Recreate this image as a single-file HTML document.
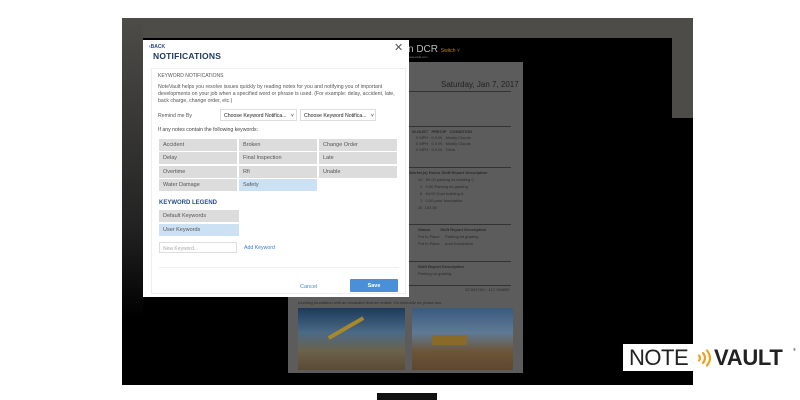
<!DOCTYPE html>
<html><head><meta charset="utf-8"><style>
*{margin:0;padding:0;box-sizing:border-box}
body{width:800px;height:400px;background:#fff;position:relative;overflow:hidden;font-family:"Liberation Sans",sans-serif}
.a{position:absolute}
.t{position:absolute;white-space:nowrap}
.cell{position:absolute;height:12px;background:#dcdcdc;font-size:5.5px;color:#555;padding:3px 0 0 4px}
.blue{background:#cde1f5}
.r{position:absolute;color:#2a2a2a;font-size:4px;white-space:nowrap}
</style></head><body>
<div class="a" style="left:377px;top:393px;width:60px;height:7px;background:#111"></div>
<div class="a" style="left:122px;top:18px;width:571px;height:367px;background:#000"></div>
<div class="a" style="left:122px;top:18px;width:571px;height:100px;background:#4d4c48"></div>
<div class="a" style="left:122px;top:18px;width:21px;height:300px;background:linear-gradient(#4d4c48,#222 70%,#000)"></div>
<div class="a" style="left:143px;top:38px;width:529px;height:344px;background:#000"></div>
<!-- report -->
<div class="t" style="left:408px;top:44px;color:#bbb;font-size:10px">n DCR <span style="color:#b8860b;font-size:5px">Switch ˅</span></div>
<div class="t" style="left:409px;top:55px;color:#888;font-size:3px">notevault.com</div>
<div class="a" style="left:408px;top:62px;width:115px;height:308px;background:#5c5c5c"></div>
<div class="a" style="left:288px;top:296px;width:235px;height:77px;background:#5c5c5c"></div>
<div class="t" style="left:441px;top:80px;color:#222;font-size:8px">Saturday, Jan 7, 2017</div>
<div class="a" style="left:408px;top:91px;width:103px;height:1px;background:#333"></div>
<div class="a" style="left:408px;top:126px;width:103px;height:1px;background:#333"></div>
<div class="r" style="left:412px;top:129px;font-weight:bold">W-GUST &nbsp; PRECIP &nbsp; CONDITION</div>
<div class="r" style="left:416px;top:135px">0 MPH &nbsp; 0.0 IN &nbsp; Mostly Clouds</div>
<div class="r" style="left:416px;top:141px">0 MPH &nbsp; 0.0 IN &nbsp; Mostly Clouds</div>
<div class="r" style="left:416px;top:147px">0 MPH &nbsp; 0.0 IN &nbsp; Clear</div>
<div class="a" style="left:408px;top:167px;width:103px;height:1px;background:#333"></div>
<div class="r" style="left:409px;top:170px;font-weight:bold">Worker(s) Hours Shift Report Description</div>
<div class="r" style="left:418px;top:177px">10 &nbsp; 80.00 parking lot building C</div>
<div class="r" style="left:420px;top:184px">1 &nbsp; 9.50 Parking lot grading</div>
<div class="r" style="left:420px;top:191px">8 &nbsp; 64.00 Duct building A</div>
<div class="r" style="left:420px;top:198px">1 &nbsp; 0.00 pour foundation</div>
<div class="r" style="left:418px;top:205px">20 &nbsp;153.50</div>
<div class="a" style="left:408px;top:224px;width:103px;height:1px;background:#333"></div>
<div class="r" style="left:418px;top:227px;font-weight:bold">Status &nbsp; &nbsp; &nbsp; &nbsp; Shift Report Description</div>
<div class="r" style="left:418px;top:234px">Put In Place &nbsp; &nbsp; Parking lot grading</div>
<div class="r" style="left:418px;top:241px">Put In Place &nbsp; &nbsp; pour foundation</div>
<div class="a" style="left:408px;top:261px;width:103px;height:1px;background:#333"></div>
<div class="r" style="left:418px;top:264px;font-weight:bold">Shift Report Description</div>
<div class="r" style="left:418px;top:271px">Parking lot grading</div>
<div class="a" style="left:290px;top:285px;width:221px;height:1px;background:#333"></div>
<div class="r" style="left:465px;top:287px">32.901740 / -117.196830</div>
<div class="r" style="left:298px;top:300px">Leveling foundation with an excavator that we rented. On schedule for phase two.</div>
<div class="a" style="left:298px;top:308px;width:107px;height:62px;background:linear-gradient(#1d3a5c,#4a6a85 40%,#6b6149 70%,#5a4a35)"></div>
<div class="a" style="left:412px;top:308px;width:101px;height:62px;background:linear-gradient(#3a5a7e,#5e7a95 40%,#6d5538 70%,#5e4630)"></div>
<div class="a" style="left:330px;top:325px;width:40px;height:20px;border-top:4px solid #a88828;transform:rotate(-30deg)"></div>
<div class="a" style="left:432px;top:335px;width:35px;height:10px;background:#8a6a28"></div>
<!-- dialog -->
<div class="a" style="left:143px;top:40px;width:266px;height:257px;background:#fff"></div>
<div class="t" style="left:149px;top:44px;font-size:5px;color:#2a4a7a;font-weight:bold">‹BACK</div>
<div class="t" style="left:153px;top:51px;font-size:8.5px;color:#1f3a63;font-weight:bold;letter-spacing:.2px">NOTIFICATIONS</div>
<div class="t" style="left:394px;top:41px;font-size:11px;color:#555">✕</div>
<div class="a" style="left:151px;top:68px;width:255px;height:226px;border:1px solid #eee"></div>
<div class="t" style="left:158px;top:73px;font-size:5px;color:#555">KEYWORD NOTIFICATIONS</div>
<div class="a" style="left:158px;top:84px;width:240px;font-size:5.2px;line-height:7px;color:#555">NoteVault helps you resolve issues quickly by reading notes for you and notifying you of important developments on your job when a specified word or phrase is used. (For example: delay, accident, late, back charge, change order, etc.)</div>
<div class="t" style="left:158px;top:113px;font-size:5.2px;color:#555">Remind me By</div>
<div class="a" style="left:220px;top:109px;width:77px;height:12px;border:1px solid #ddd;font-size:5.2px;color:#222;padding:3px 0 0 3px">Choose Keyword Notifica... &nbsp; ˅</div>
<div class="a" style="left:300px;top:109px;width:76px;height:12px;border:1px solid #ddd;font-size:5.2px;color:#222;padding:3px 0 0 3px">Choose Keyword Notifica... &nbsp; ˅</div>
<div class="t" style="left:158px;top:127px;font-size:5.2px;color:#444">If any notes contain the following keywords:</div>
<div class="cell" style="left:159px;top:139px;width:78px">Accident</div>
<div class="cell" style="left:239px;top:139px;width:78px">Broken</div>
<div class="cell" style="left:319px;top:139px;width:78px">Change Order</div>
<div class="cell" style="left:159px;top:152px;width:78px">Delay</div>
<div class="cell" style="left:239px;top:152px;width:78px">Final Inspection</div>
<div class="cell" style="left:319px;top:152px;width:78px">Late</div>
<div class="cell" style="left:159px;top:166px;width:78px">Overtime</div>
<div class="cell" style="left:239px;top:166px;width:78px">Rfi</div>
<div class="cell" style="left:319px;top:166px;width:78px">Unable</div>
<div class="cell" style="left:159px;top:179px;width:78px">Water Damage</div>
<div class="cell blue" style="left:239px;top:179px;width:78px">Safety</div>
<div class="t" style="left:159px;top:200px;font-size:6px;color:#2a4f8a;font-weight:bold">KEYWORD LEGEND</div>
<div class="cell" style="left:159px;top:210px;width:80px;height:12px">Default Keywords</div>
<div class="cell blue" style="left:159px;top:224px;width:80px;height:12px">User Keywords</div>
<div class="a" style="left:159px;top:242px;width:78px;height:11px;border:1px solid #ddd;font-size:5px;color:#aaa;padding:2.5px 0 0 3px">New Keyword...</div>
<div class="t" style="left:244px;top:245px;font-size:5.2px;color:#3a7bd5">Add Keyword</div>
<div class="a" style="left:159px;top:267px;width:240px;height:1px;background:#eee"></div>
<div class="t" style="left:300px;top:284px;font-size:5.5px;color:#4a8ad5">Cancel</div>
<div class="a" style="left:350px;top:279px;width:48px;height:13px;background:#4a90d9;border-radius:1px;color:#fff;font-size:5.5px;font-weight:bold;text-align:center;padding-top:3.5px">Save</div>
<!-- logo -->
<div class="a" style="left:623px;top:344px;width:177px;height:27px;background:#fff"></div>
<div class="t" style="left:629px;top:345px;font-size:22px;line-height:26px;color:#222;letter-spacing:-.5px">NOTE</div>
<svg class="a" style="left:696px;top:348px" width="16" height="20" viewBox="0 0 16 20"><g fill="none" stroke="#f0a020" stroke-width="2.2" stroke-linecap="round"><path d="M3 7.5q2 2.5 0 5"/><path d="M7 5q4 5 0 10"/><path d="M11 2.5q6 7.5 0 15"/></g></svg>
<div class="t" style="left:714px;top:345px;font-size:22px;line-height:26px;color:#222;font-weight:bold;letter-spacing:-.3px">VAULT</div>
<div class="t" style="left:793px;top:347px;font-size:4px;color:#222">®</div>
</body></html>
